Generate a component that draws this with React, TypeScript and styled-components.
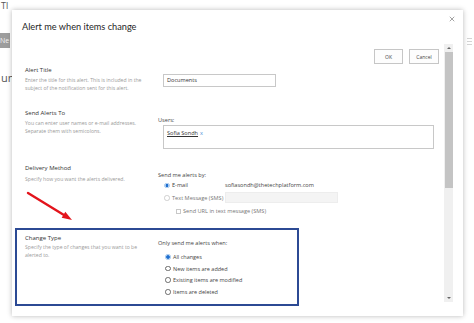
import React from 'react';
import styled, { createGlobalStyle } from 'styled-components';

const GlobalStyle = createGlobalStyle`
  html, body {
    margin: 0;
    padding: 0;
    background: #ffffff;
  }
  body {
    width: 474px;
    height: 323px;
    overflow: hidden;
    font-family: "Open Sans", "Noto Sans", sans-serif;
  }
`;

function App() {
  return (
    <Page>
      <GlobalStyle />
      <Backdrop>
        <BackColumn>
          <BackText>Tl</BackText>
          <BackTab>Ne</BackTab>
          <BackText $big>un</BackText>
        </BackColumn>
        <BackMenu>
          <span />
          <span />
          <span />
        </BackMenu>
      </Backdrop>

      <Dialog>
        <Header>
          <Title>Alert me when items change</Title>
          <Close viewBox="0 0 8 8">
            <path d="M1 1 L7 7 M7 1 L1 7" />
          </Close>
        </Header>

        <Body>
          <Content>
            <ButtonRow>
              <Button $w={29}>OK</Button>
              <Button $w={30}>Cancel</Button>
            </ButtonRow>

            <Section $h={43}>
              <LeftCol>
                <Label>Alert Title</Label>
                <Desc>
                  Enter the title for this alert. This is included in the
                  <br />
                  subject of the notification sent for this alert.
                </Desc>
              </LeftCol>
              <RightCol $top={8}>
                <TextInput $w={113}>Documents</TextInput>
              </RightCol>
            </Section>

            <Section $h={55}>
              <LeftCol>
                <Label>Send Alerts To</Label>
                <Desc>
                  You can enter user names or e-mail addresses.
                  <br />
                  Separate them with semicolons.
                </Desc>
              </LeftCol>
              <RightCol $top={7}>
                <FieldLabel>Users:</FieldLabel>
                <UsersBox>
                  <UserName>Sofia Sondh</UserName>
                  <UserRemove>x</UserRemove>
                </UsersBox>
              </RightCol>
            </Section>

            <Section $h={66}>
              <LeftCol>
                <Label>Delivery Method</Label>
                <Desc $gap={4}>Specify how you want the alerts delivered.</Desc>
              </LeftCol>
              <RightCol $top={7}>
                <FieldLabel>Send me alerts by:</FieldLabel>
                <DeliveryRow>
                  <OptionLabel>
                    <Radio $checked />
                    E-mail
                  </OptionLabel>
                  <Value>sofiasondh@thetechplatform.com</Value>
                </DeliveryRow>
                <DeliveryRow>
                  <OptionLabel $disabled>
                    <Radio $disabled />
                    Text Message (SMS)
                  </OptionLabel>
                  <SmsInput />
                </DeliveryRow>
                <CheckRow>
                  <CheckBox />
                  Send URL in text message (SMS)
                </CheckRow>
              </RightCol>
            </Section>

            <Section $h={78} $pad={4} $highlight>
              <LeftCol>
                <Label>Change Type</Label>
                <Desc $gap={2}>
                  Specify the type of changes that you want to be
                  <br />
                  alerted to.
                </Desc>
              </LeftCol>
              <RightCol $top={5}>
                <FieldLabel>Only send me alerts when:</FieldLabel>
                <ChoiceList>
                  <Choice>
                    <Radio $checked />
                    All changes
                  </Choice>
                  <Choice>
                    <Radio />
                    New items are added
                  </Choice>
                  <Choice>
                    <Radio />
                    Existing items are modified
                  </Choice>
                  <Choice>
                    <Radio />
                    Items are deleted
                  </Choice>
                </ChoiceList>
              </RightCol>
            </Section>
          </Content>

          <Scrollbar>
            <ScrollArrow viewBox="0 0 6 4">
              <path d="M1 3 L3 1 L5 3 Z" />
            </ScrollArrow>
            <Thumb />
            <TrackRest />
            <ScrollArrow viewBox="0 0 6 4">
              <path d="M1 1 L3 3 L5 1 Z" />
            </ScrollArrow>
          </Scrollbar>
        </Body>
      </Dialog>

      <Arrow viewBox="0 0 52 34">
        <line x1="3" y1="3" x2="38.5" y2="24.8" />
        <polygon points="47,30 36.7,27.8 40.3,21.8" />
      </Arrow>
    </Page>
  );
}

export default App;

const Page = styled.div`
  position: relative;
  width: 474px;
  height: 323px;
  overflow: hidden;
  background: #ffffff;
`;

const Backdrop = styled.div`
  display: flex;
  justify-content: space-between;
  height: 100%;
`;

const BackColumn = styled.div`
  display: flex;
  flex-direction: column;
  align-items: flex-start;
`;

const BackText = styled.div<{ $big?: boolean }>`
  font-size: ${(p) => (p.$big ? '11px' : '9px')};
  line-height: 12px;
  color: #555;
  padding-left: 1px;
  margin-top: ${(p) => (p.$big ? '24px' : '0')};
`;

const BackTab = styled.div`
  margin-top: 21px;
  width: 10px;
  height: 15px;
  background: #9d9d9d;
  color: #f2f2f2;
  font-size: 7px;
  line-height: 15px;
  overflow: hidden;
`;

const BackMenu = styled.div`
  display: flex;
  flex-direction: column;
  gap: 2px;
  padding: 38px 2px 0 0;

  span {
    display: block;
    width: 5px;
    height: 1px;
    background: #d4d4d4;
  }
`;

const Dialog = styled.div`
  position: absolute;
  left: 12px;
  top: 10px;
  width: 451px;
  height: 306px;
  background: #ffffff;
  box-shadow: 0 0 5px rgba(0, 0, 0, 0.28);
  display: flex;
  flex-direction: column;
`;

const Header = styled.div`
  height: 34px;
  display: flex;
  justify-content: space-between;
  align-items: flex-start;
  padding: 0 8px 0 10px;
  flex-shrink: 0;
`;

const Title = styled.div`
  margin-top: 11px;
  font-family: Lato, "Open Sans", sans-serif;
  font-size: 9.2px;
  line-height: 12px;
  color: #262626;
`;

const Close = styled.svg`
  width: 6px;
  height: 6px;
  margin-top: 6px;
  fill: none;
  stroke: #777;
  stroke-width: 0.9;
`;

const Body = styled.div`
  flex: 1;
  display: flex;
  padding: 0 10px 14px 3px;
  min-height: 0;
`;

const Content = styled.div`
  flex: 1;
  display: flex;
  flex-direction: column;
  padding-top: 5px;
  min-width: 0;
`;

const ButtonRow = styled.div`
  display: flex;
  justify-content: flex-end;
  gap: 6px;
  padding-right: 5px;
  height: 15px;
`;

const Button = styled.div<{ $w: number }>`
  width: ${(p) => p.$w}px;
  height: 15px;
  box-sizing: border-box;
  border: 1px solid #c6c6c6;
  background: #fdfdfd;
  font-size: 5px;
  color: #444;
  display: flex;
  align-items: center;
  justify-content: center;
`;

const Section = styled.div<{ $h: number; $pad?: number; $highlight?: boolean }>`
  display: flex;
  box-sizing: border-box;
  height: ${(p) => p.$h}px;
  width: ${(p) => (p.$highlight ? '284px' : 'auto')};
  padding: ${(p) => p.$pad ?? 0}px 0 0 8px;
  border: 2px solid ${(p) => (p.$highlight ? '#2c4a94' : 'transparent')};
  flex-shrink: 0;
`;

const LeftCol = styled.div`
  width: 133px;
  flex-shrink: 0;
`;

const Label = styled.div`
  font-size: 6px;
  line-height: 8px;
  color: #333;
`;

const Desc = styled.div<{ $gap?: number }>`
  margin-top: ${(p) => p.$gap ?? 3}px;
  font-size: 5.1px;
  line-height: 7.5px;
  color: #9a9a9a;
  white-space: nowrap;
`;

const RightCol = styled.div<{ $top: number }>`
  flex: 1;
  padding-top: ${(p) => p.$top}px;
  display: flex;
  flex-direction: column;
  align-items: flex-start;
  min-width: 0;
`;

const FieldLabel = styled.div`
  font-size: 5.6px;
  line-height: 8px;
  color: #444;
`;

const TextInput = styled.div<{ $w: number }>`
  margin-left: 5px;
  width: ${(p) => p.$w}px;
  height: 13px;
  box-sizing: border-box;
  border: 1px solid #c8c8c8;
  padding-left: 3px;
  font-size: 5.6px;
  line-height: 11px;
  color: #333;
`;

const UsersBox = styled.div`
  margin: 1px 0 0 5px;
  width: 271px;
  height: 24px;
  box-sizing: border-box;
  border: 1px solid #c8c8c8;
  padding: 3px 3px 0;
  font-size: 5.6px;
  line-height: 8px;
`;

const UserName = styled.span`
  color: #333;
  text-decoration: underline;
`;

const UserRemove = styled.span`
  color: #4a8fd6;
  margin-left: 2px;
`;

const DeliveryRow = styled.div`
  display: grid;
  grid-template-columns: 67px auto;
  align-items: center;
  height: 12.5px;
  &:first-of-type {
    margin-top: 1px;
  }
`;

const OptionLabel = styled.div<{ $disabled?: boolean }>`
  display: flex;
  align-items: center;
  gap: 2.5px;
  padding-left: 6px;
  font-size: 5.6px;
  color: ${(p) => (p.$disabled ? '#777' : '#444')};
  white-space: nowrap;
`;

const Radio = styled.span<{ $checked?: boolean; $disabled?: boolean }>`
  display: inline-block;
  width: 5.5px;
  height: 5.5px;
  box-sizing: border-box;
  border-radius: 50%;
  flex-shrink: 0;
  border: 0.7px solid ${(p) => (p.$checked ? '#9cc3ec' : p.$disabled ? '#cfcfcf' : '#6a6a6a')};
  background: ${(p) => (p.$checked ? 'radial-gradient(circle, #1e6fd0 55%, #cfe2f7 62%)' : '#fff')};
`;

const Value = styled.div`
  font-size: 5.6px;
  color: #444;
  white-space: nowrap;
`;

const SmsInput = styled.div`
  width: 113px;
  height: 11px;
  box-sizing: border-box;
  background: #f4f4f4;
  border: 1px solid #ededed;
`;

const CheckRow = styled.div`
  display: flex;
  align-items: center;
  gap: 2px;
  height: 12.5px;
  margin-top: 1px;
  padding-left: 18px;
  font-size: 5.6px;
  color: #777;
  white-space: nowrap;
`;

const CheckBox = styled.span`
  display: inline-block;
  width: 5px;
  height: 5px;
  box-sizing: border-box;
  border: 0.7px solid #c8c8c8;
  background: #fff;
`;

const ChoiceList = styled.div`
  margin-top: 4px;
  display: flex;
  flex-direction: column;
`;

const Choice = styled.div`
  display: flex;
  align-items: center;
  gap: 2.5px;
  height: 11.7px;
  padding-left: 7px;
  font-size: 5.5px;
  color: #444;
  white-space: nowrap;
`;

const Scrollbar = styled.div`
  width: 9px;
  background: #f0f0f0;
  display: flex;
  flex-direction: column;
  align-items: center;
`;

const ScrollArrow = styled.svg`
  width: 6px;
  height: 4px;
  margin: 2px 0;
  fill: #666;
`;

const Thumb = styled.div`
  width: 8px;
  height: 136px;
  background: #c4c4c4;
`;

const TrackRest = styled.div`
  flex: 1;
`;

const Arrow = styled.svg`
  position: absolute;
  left: 25px;
  top: 190px;
  width: 52px;
  height: 34px;
  overflow: visible;

  line {
    stroke: #e3141c;
    stroke-width: 2.4;
    stroke-linecap: round;
  }
  polygon {
    fill: #e3141c;
  }
`;
